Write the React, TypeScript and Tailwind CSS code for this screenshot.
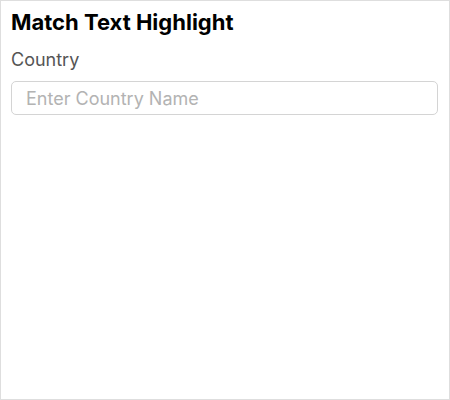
export default function App() {
    return (
        <div className="w-[450px] h-[400px] border border-[#dedede] bg-white px-[10px] pt-[8px]" style={{ fontFamily: "Inter, 'Liberation Sans', sans-serif" }}>
            <h1 className="text-[22px] leading-[27px] font-bold text-black">Match Text Highlight</h1>
            <label className="block mt-[13px] text-[18px] leading-[22px] text-[#555]">Country</label>
            <input
                type="text"
                placeholder="Enter Country Name"
                className="mt-[10px] w-[427px] h-[34px] rounded-[5px] border border-[#d4d4d4] px-[14px] text-[18px] text-[#333] placeholder:text-[#b3b3b3] outline-none"
            />
        </div>
    );
}
